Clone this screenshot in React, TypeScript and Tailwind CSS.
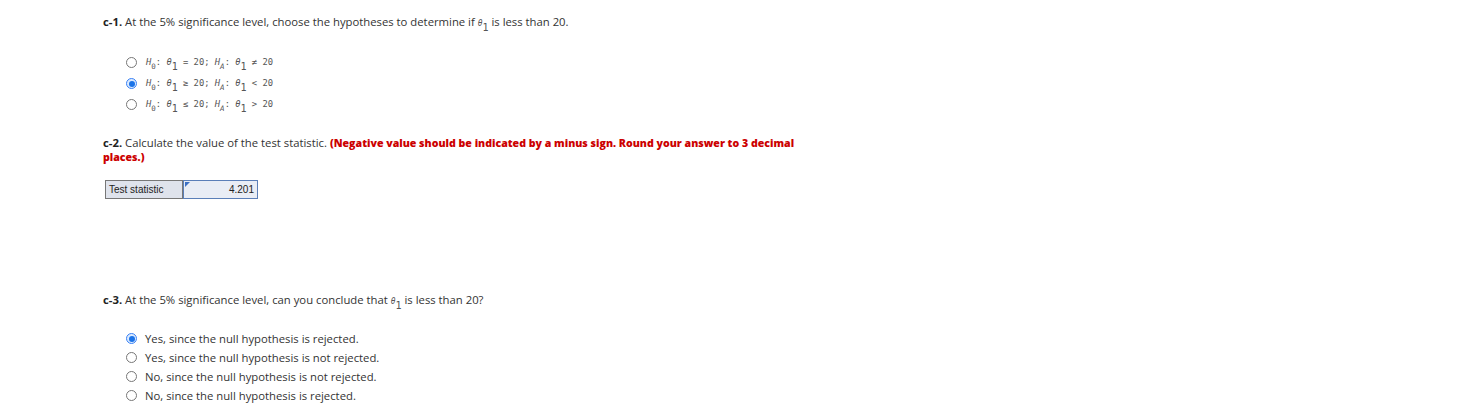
import React from "react";

function Radio({ checked }: { checked?: boolean }) {
  return checked ? (
    <span className="inline-flex h-[11px] w-[11px] shrink-0 items-center justify-center rounded-full border border-[#3b82f6] bg-[#dbeafe]">
      <span className="h-[6px] w-[6px] rounded-full bg-[#1a73e8]" />
    </span>
  ) : (
    <span className="inline-block h-[11px] w-[11px] shrink-0 rounded-full border border-[#777] bg-white" />
  );
}

function Theta() {
  return (
    <span className="italic leading-[0]">
      θ<sub className="text-[10px] not-italic leading-[0] align-[-2px]">1</sub>
    </span>
  );
}

function Hyp({ op1, op2 }: { op1: string; op2: string }) {
  return (
    <span className="font-['DejaVu_Sans_Mono',monospace] text-[8.8px] text-[#555] whitespace-pre">
      <span className="italic">H</span>
      <sub className="text-[7.5px] align-[-2px]">0</sub>: <Theta /> {op1} 20; <span className="italic">H</span>
      <sub className="text-[7.5px] italic align-[-2px]">A</sub>: <Theta /> {op2} 20
    </span>
  );
}

const hyps = [
  { op1: "=", op2: "≠", checked: false },
  { op1: "≥", op2: "<", checked: true },
  { op1: "≤", op2: ">", checked: false },
];

const answers = [
  { text: "Yes, since the null hypothesis is rejected.", checked: true },
  { text: "Yes, since the null hypothesis is not rejected.", checked: false },
  { text: "No, since the null hypothesis is not rejected.", checked: false },
  { text: "No, since the null hypothesis is rejected.", checked: false },
];

export default function App() {
  return (
    <div className="min-h-[412px] bg-white pl-[103px] pt-[15px] font-['Open_Sans',sans-serif] text-[11.3px] leading-[13px] text-[#333]">
      <div className="w-[720px]">
        {/* c-1 */}
        <p>
          <b className="text-[#222]">c-1.</b> At the 5% significance level, choose the hypotheses to determine if{" "}
          <span className="font-['DejaVu_Sans_Mono',monospace] text-[8px] leading-[0] text-[#555]">
            <Theta />
          </span>{" "}
          is less than 20.
        </p>

        <ul className="mt-[24px] pl-[23px]">
          {hyps.map((h, i) => (
            <li key={i} className="flex h-[21px] items-center gap-[9px]">
              <Radio checked={h.checked} />
              <Hyp op1={h.op1} op2={h.op2} />
            </li>
          ))}
        </ul>

        {/* c-2 */}
        <p className="mt-[21px]">
          <b className="text-[#222]">c-2.</b> Calculate the value of the test statistic.{" "}
          <b className="text-[10.6px] font-extrabold text-[#c00]">
            (Negative value should be indicated by a minus sign. Round your answer to 3 decimal
          </b>
          <br />
          <b className="text-[10.6px] font-extrabold text-[#c00]">places.)</b>
        </p>

        <div className="ml-[2px] mt-[16px] flex h-[19px] w-[153px] font-['Liberation_Sans',Arial,sans-serif] text-[10px] text-[#222]">
          <div className="flex w-[78px] items-center border border-[#777] bg-[#dfe3ec] pl-[3px]">Test statistic</div>
          <div className="relative flex flex-1 items-center justify-end border border-[#5b7fb8] bg-[#e9edf5] pr-[3px]">
            <span className="absolute left-[1px] top-[1px] h-0 w-0 border-r-[5px] border-t-[5px] border-r-transparent border-t-[#3b6fc4]" />
            4.201
          </div>
        </div>

        {/* c-3 */}
        <p className="mt-[94px]">
          <b className="text-[#222]">c-3.</b> At the 5% significance level, can you conclude that{" "}
          <span className="font-['DejaVu_Sans_Mono',monospace] text-[8px] leading-[0] text-[#555]">
            <Theta />
          </span>{" "}
          is less than 20?
        </p>

        <ul className="mt-[23px] pl-[23px]">
          {answers.map((a, i) => (
            <li key={i} className="flex h-[19px] items-center gap-[8px]">
              <Radio checked={a.checked} />
              <span>{a.text}</span>
            </li>
          ))}
        </ul>
      </div>
    </div>
  );
}
